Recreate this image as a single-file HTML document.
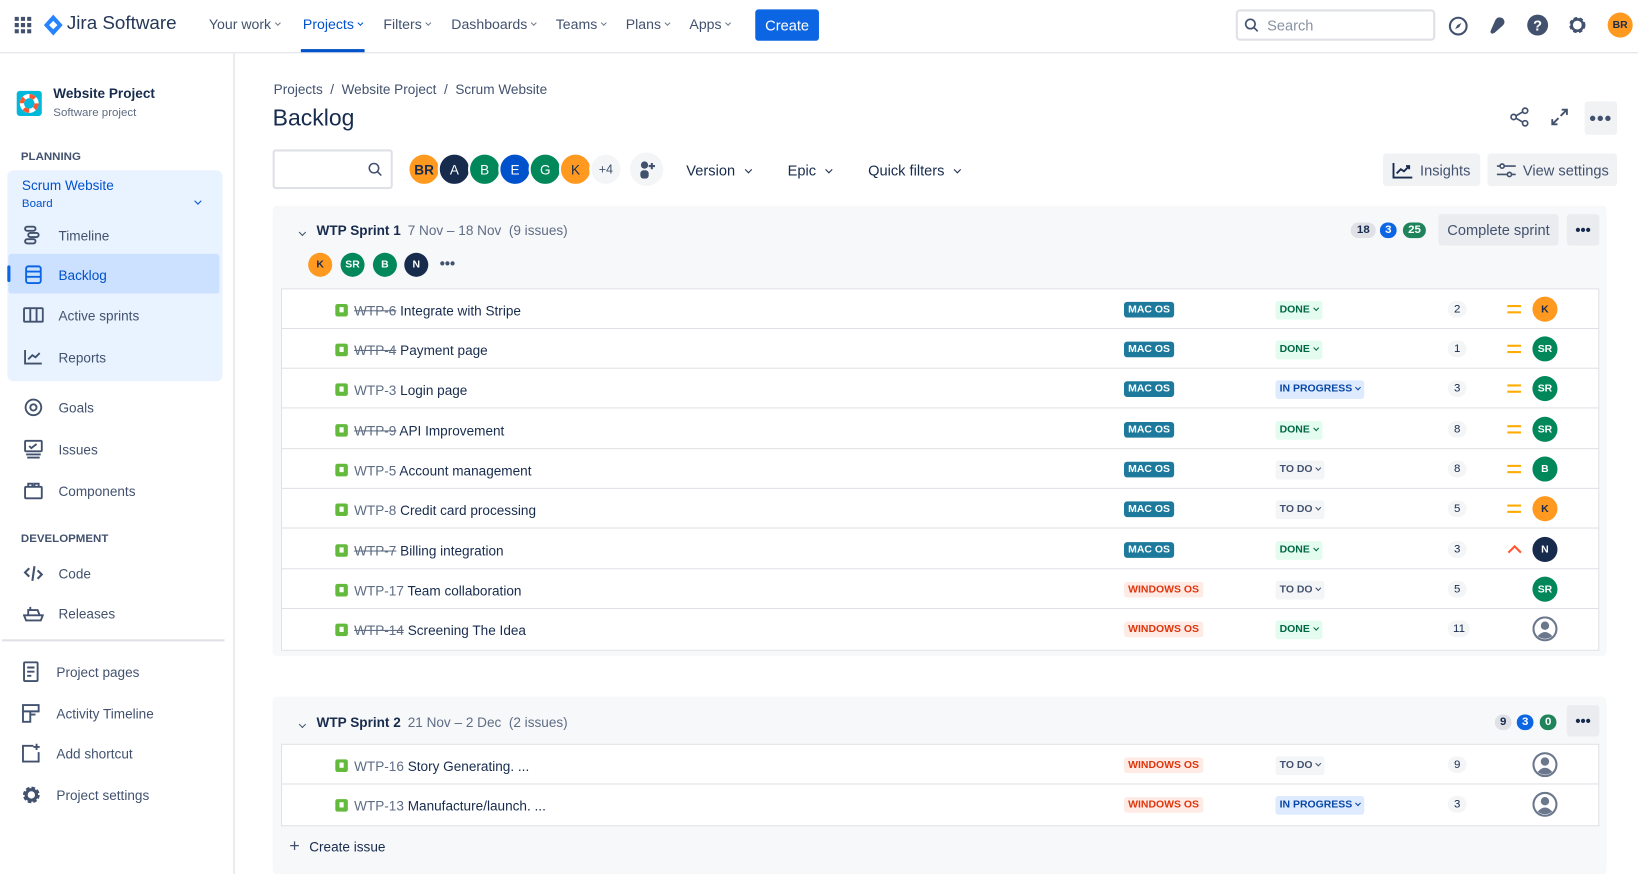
<!DOCTYPE html>
<html><head><meta charset="utf-8">
<style>
*{box-sizing:border-box;margin:0;padding:0}
html,body{width:1638px;height:874px;overflow:hidden;background:#fff}
body{font-family:"Liberation Sans",sans-serif;color:#172b4d}
#w{position:absolute;left:0;top:0;width:1568px;height:837px;transform:scale(1.0446);transform-origin:0 0}
.a{position:absolute}
.ch{display:inline-block;width:5px;height:5px;border-right:1.5px solid currentColor;border-bottom:1.5px solid currentColor;transform:rotate(45deg);vertical-align:middle;margin:-4px 0 0 4px}
.nav{font-size:13.5px;color:#42526e;top:16px}
.nav .ch{color:#6b778c;width:4px;height:4px}
.av{position:absolute;border-radius:50%;color:#fff;font-size:11px;font-weight:bold;display:flex;align-items:center;justify-content:center}
.si{position:absolute;left:22px;display:flex;align-items:center;font-size:13px;color:#42526e}
.si svg{margin-right:14px}
.row{position:absolute;left:0;width:1261px;height:38px;border-bottom:1px solid #dfe1e6;font-size:13px}
.row .ic{position:absolute;left:51px;top:14px;width:12px;height:12px;background:#63ba3c;border-radius:2px}
.row .ic:after{content:"";position:absolute;left:4px;top:3px;width:4px;height:5px;background:#fff}
.row .k{position:absolute;left:69px;top:13px;color:#5e6c84}
.row .k s{color:#5e6c84}
.row .t{color:#172b4d}
.lb{position:absolute;top:12px;left:806px;font-size:10px;font-weight:bold;padding:1px 4px;border-radius:3px;line-height:13px}
.mac{background:#1d7a9c;color:#fff}
.win{background:#ffebe6;color:#de350b}
.st{position:absolute;top:11px;left:951px;font-size:10px;font-weight:bold;padding:2px 4px;border-radius:3px;line-height:14px}
.st .ch{width:4px;height:4px;margin-top:-3px;margin-left:4px}
.done{background:#e3fcef;color:#006644}
.prog{background:#deebff;color:#0747a6}
.todo{background:#f4f5f7;color:#42526e}
.pt{position:absolute;top:11px;left:1116px;min-width:18px;height:16px;border-radius:8px;background:#f4f5f7;font-size:11px;text-align:center;line-height:16px;color:#172b4d;padding:0 5px}
.pr{position:absolute;left:1173px;top:15px;width:13px;height:8px;border-top:2px solid #ffab00;border-bottom:2px solid #ffab00}
.ra{position:absolute;left:1197px;top:7px;width:24px;height:24px}
.btn{position:absolute;background:#f1f2f4;border-radius:3px;font-size:14px;color:#42526e;display:flex;align-items:center;justify-content:center}
.flt{position:absolute;top:155px;font-size:14px;color:#172b4d}
.flt .ch{margin-left:10px;width:5px;height:5px}
</style></head><body><div id="w">
<div class="a" style="left:0;top:50px;width:1568px;height:1px;background:#dfe1e6"></div>
<svg class="a" style="left:14px;top:16px" width="16" height="16"><g fill="#42526e"><rect x="0" y="0" width="4" height="4"/><rect x="6" y="0" width="4" height="4"/><rect x="12" y="0" width="4" height="4"/><rect x="0" y="6" width="4" height="4"/><rect x="6" y="6" width="4" height="4"/><rect x="12" y="6" width="4" height="4"/><rect x="0" y="12" width="4" height="4"/><rect x="6" y="12" width="4" height="4"/><rect x="12" y="12" width="4" height="4"/></g></svg>
<svg class="a" style="left:42px;top:14px" width="18" height="20"><path d="M9 0 L18 10 L9 20 L0 10Z M9 6 L5 10 L9 14 L13 10Z" fill="#2684ff" fill-rule="evenodd"/></svg>
<div class="a" style="left:64px;top:12px;font-size:18px;color:#253858">Jira Software</div>
<div class="a nav" style="left:200px">Your work<span class="ch"></span></div>
<div class="a nav" style="left:290px;color:#0052cc">Projects<span class="ch" style="color:#0052cc"></span></div>
<div class="a" style="left:288px;top:47px;width:61px;height:3px;background:#0052cc"></div>
<div class="a nav" style="left:367px">Filters<span class="ch"></span></div>
<div class="a nav" style="left:432px">Dashboards<span class="ch"></span></div>
<div class="a nav" style="left:532px">Teams<span class="ch"></span></div>
<div class="a nav" style="left:599px">Plans<span class="ch"></span></div>
<div class="a nav" style="left:660px">Apps<span class="ch"></span></div>
<div class="a" style="left:723px;top:9px;width:61px;height:30px;background:#0c66e4;border-radius:3px;color:#fff;font-size:14px;text-align:center;line-height:30px">Create</div>
<div class="a" style="left:1183px;top:9px;width:191px;height:30px;border:2px solid #dfe1e6;border-radius:4px;font-size:14px;color:#8993a4;padding:5px 0 0 28px">Search</div>
<svg class="a" style="left:1191px;top:17px" width="14" height="14"><circle cx="6" cy="6" r="4.5" fill="none" stroke="#42526e" stroke-width="1.6"/><path d="M9.5 9.5 L13 13" stroke="#42526e" stroke-width="1.6"/></svg>
<svg class="a" style="left:1386px;top:15px" width="20" height="20"><circle cx="10" cy="10" r="8" fill="none" stroke="#42526e" stroke-width="2"/><path d="M13 7 L9 9 L7 13 L11 11Z" fill="#42526e"/></svg>
<svg class="a" style="left:1424px;top:14px" width="20" height="20"><path d="M4 15 L8 6 Q10 2 14 4 Q17 7 14 10 L6 17Z M3 16 L5 18" fill="#42526e" stroke="#42526e" stroke-width="1.5"/></svg>
<svg class="a" style="left:1461px;top:13px" width="22" height="22"><circle cx="11" cy="11" r="10" fill="#42526e"/><text x="11" y="16" font-size="14" font-weight="bold" fill="#fff" text-anchor="middle" font-family="Liberation Sans">?</text></svg>
<svg class="a" style="left:1500px;top:14px" width="20" height="20"><circle cx="10" cy="10" r="6" fill="none" stroke="#42526e" stroke-width="3.5" stroke-dasharray="3 2"/><circle cx="10" cy="10" r="5.5" fill="none" stroke="#42526e" stroke-width="2.5"/></svg>
<div class="av" style="left:1539px;top:12px;width:24px;height:24px;background:#ff991f;color:#172b4d;font-size:10px">BR</div>

<div class="a" style="left:223px;top:51px;width:2px;height:786px;background:#ebecf0"></div>
<div class="a" style="left:16px;top:87px;width:24px;height:24px;background:#00b8d9;border-radius:3px"></div>
<svg class="a" style="left:18px;top:89px" width="20" height="20"><circle cx="10" cy="10" r="7" fill="none" stroke="#fff" stroke-width="4"/><circle cx="10" cy="10" r="7" fill="none" stroke="#ff5630" stroke-width="4" stroke-dasharray="5.5 5.5"/></svg>
<div class="a" style="left:51px;top:82px;font-size:13px;font-weight:bold;color:#172b4d">Website Project</div>
<div class="a" style="left:51px;top:102px;font-size:11px;color:#5e6c84">Software project</div>
<div class="a" style="left:20px;top:144px;font-size:11px;font-weight:bold;color:#42526e">PLANNING</div>
<div class="a" style="left:7px;top:163px;width:206px;height:202px;background:#e9f2ff;border-radius:6px"></div>
<div class="a" style="left:21px;top:170px;font-size:13px;color:#0052cc">Scrum Website</div>
<div class="a" style="left:21px;top:189px;font-size:11px;color:#0052cc">Board</div>
<div class="a" style="left:187px;top:184px;color:#0052cc"><span class="ch" style="margin:0"></span></div>
<div class="a" style="left:8px;top:243px;width:202px;height:38px;background:#cce0ff;border-radius:3px"></div>
<div class="a" style="left:7px;top:254px;width:3px;height:16px;background:#0c66e4;border-radius:2px"></div>
<div class="si" style="top:215px"><svg width="20" height="20"><g fill="none" stroke="#42526e" stroke-width="1.8"><rect x="2" y="2" width="10" height="4" rx="2"/><rect x="5" y="8" width="10" height="4" rx="2"/><rect x="2" y="14" width="10" height="4" rx="2"/></g></svg>Timeline</div>
<div class="si" style="top:253px;color:#0052cc"><svg width="20" height="20"><g fill="none" stroke="#0c66e4" stroke-width="1.8"><rect x="3" y="2" width="14" height="16" rx="2"/><path d="M3 7H17M3 12H17"/></g></svg>Backlog</div>
<div class="si" style="top:292px"><svg width="20" height="20"><g fill="none" stroke="#42526e" stroke-width="1.8"><rect x="1" y="3" width="18" height="13" rx="1"/><path d="M7 3V16M13 3V16"/></g></svg>Active sprints</div>
<div class="si" style="top:332px"><svg width="20" height="20"><g fill="none" stroke="#42526e" stroke-width="1.8"><path d="M2 3V16H18"/><path d="M5 12L9 8L12 10L16 6"/></g></svg>Reports</div>
<div class="si" style="top:380px"><svg width="20" height="20"><g fill="none" stroke="#42526e" stroke-width="1.8"><circle cx="10" cy="10" r="7.5"/><circle cx="10" cy="10" r="3"/></g></svg>Goals</div>
<div class="si" style="top:420px"><svg width="20" height="20"><g fill="none" stroke="#42526e" stroke-width="1.8"><rect x="2" y="2" width="16" height="10" rx="1"/><path d="M6 7L8 9L13 5M3 15H17M4 18H16"/></g></svg>Issues</div>
<div class="si" style="top:460px"><svg width="20" height="20"><g fill="none" stroke="#42526e" stroke-width="1.8"><rect x="2" y="6" width="16" height="11" rx="1"/><path d="M5 6V3H9V6M11 6V3H15V6"/></g></svg>Components</div>
<div class="a" style="left:20px;top:510px;font-size:11px;font-weight:bold;color:#42526e">DEVELOPMENT</div>
<div class="si" style="top:539px"><svg width="20" height="20"><g fill="none" stroke="#42526e" stroke-width="2"><path d="M6 5L2 9L6 13M14 7L18 11L14 15M11 3L9 17"/></g></svg>Code</div>
<div class="si" style="top:577px"><svg width="20" height="20"><g fill="none" stroke="#42526e" stroke-width="1.8"><path d="M1 12H19L17 17H3Z M5 12V7H14L16 12 M7 7V4"/></g></svg>Releases</div>
<div class="a" style="left:2px;top:612px;width:213px;height:2px;background:#dfe1e6"></div>
<div class="si" style="top:633px;left:20px"><svg width="20" height="20"><g fill="none" stroke="#42526e" stroke-width="1.8"><rect x="3" y="1" width="13" height="18" rx="1"/><path d="M6 6H13M6 10H13M6 14H10"/></g></svg>Project pages</div>
<div class="si" style="top:673px;left:20px"><svg width="20" height="20"><g fill="none" stroke="#42526e" stroke-width="1.8"><path d="M2 2H17V8H2Z M2 8V18H9V8 M9 11H14"/></g></svg>Activity Timeline</div>
<div class="si" style="top:711px;left:20px"><svg width="20" height="20"><g fill="none" stroke="#42526e" stroke-width="1.8"><path d="M12 3H2V18H17V9 M15 1V7M12 4H18"/></g></svg>Add shortcut</div>
<div class="si" style="top:751px;left:20px"><svg width="20" height="20"><circle cx="10" cy="10" r="6" fill="none" stroke="#42526e" stroke-width="4" stroke-dasharray="3 1.7"/><circle cx="10" cy="10" r="5" fill="none" stroke="#42526e" stroke-width="3"/></svg>Project settings</div>

<div class="a" style="left:262px;top:78px;font-size:13px;color:#42526e">Projects &nbsp;/&nbsp; Website Project &nbsp;/&nbsp; Scrum Website</div>
<div class="a" style="left:261px;top:100px;font-size:22px;color:#172b4d">Backlog</div>
<svg class="a" style="left:1445px;top:102px" width="20" height="20"><g fill="none" stroke="#42526e" stroke-width="1.6"><circle cx="4" cy="10" r="2.5"/><circle cx="15" cy="4" r="2.5"/><circle cx="15" cy="16" r="2.5"/><path d="M6 9L13 5M6 11L13 15"/></g></svg>
<svg class="a" style="left:1484px;top:103px" width="18" height="18"><g fill="none" stroke="#42526e" stroke-width="1.8"><path d="M10 8L16 2M11 2H16V7M8 10L2 16M2 11V16H7"/></g></svg>
<div class="btn" style="left:1517px;top:97px;width:31px;height:32px;font-size:18px;font-weight:bold;letter-spacing:1px">•••</div>
<div class="a" style="left:261px;top:143px;width:115px;height:38px;border:2px solid #dfe1e6;border-radius:3px"></div>
<svg class="a" style="left:352px;top:155px" width="14" height="14"><circle cx="6" cy="6" r="4.5" fill="none" stroke="#42526e" stroke-width="1.5"/><path d="M9.5 9.5L13 13" stroke="#42526e" stroke-width="1.5"/></svg>
<div class="av" style="left:390px;top:146px;width:32px;height:32px;background:#ff991f;color:#172b4d;font-size:13px;border:2px solid #fff">BR</div>
<div class="av" style="left:419px;top:146px;width:32px;height:32px;background:#172b4d;font-size:13px;border:2px solid #fff;font-weight:normal">A</div>
<div class="av" style="left:448px;top:146px;width:32px;height:32px;background:#00875a;font-size:13px;border:2px solid #fff;font-weight:normal">B</div>
<div class="av" style="left:477px;top:146px;width:32px;height:32px;background:#0052cc;font-size:13px;border:2px solid #fff;font-weight:normal">E</div>
<div class="av" style="left:506px;top:146px;width:32px;height:32px;background:#00875a;font-size:13px;border:2px solid #fff;font-weight:normal">G</div>
<div class="av" style="left:535px;top:146px;width:32px;height:32px;background:#ff991f;color:#172b4d;font-size:13px;border:2px solid #fff;font-weight:normal">K</div>
<div class="av" style="left:564px;top:146px;width:32px;height:32px;background:#f4f5f7;color:#42526e;font-size:12px;border:2px solid #fff;font-weight:normal">+4</div>
<div class="av" style="left:603px;top:146px;width:32px;height:32px;background:#f4f5f7"><svg width="18" height="18"><circle cx="7" cy="5" r="3.5" fill="#42526e"/><rect x="3" y="10" width="8" height="8" rx="3" fill="#42526e"/><path d="M14 3V9M11 6H17" stroke="#42526e" stroke-width="2"/></svg></div>
<div class="flt" style="left:657px">Version<span class="ch"></span></div>
<div class="flt" style="left:754px">Epic<span class="ch"></span></div>
<div class="flt" style="left:831px">Quick filters<span class="ch"></span></div>
<div class="btn" style="left:1324px;top:147px;width:93px;height:31px"><svg width="20" height="16" style="margin-right:6px"><g fill="none" stroke="#172b4d" stroke-width="1.8"><path d="M1 1V15H19"/><path d="M4 11L8 7L11 9L16 4M13 4H16V7"/></g></svg>Insights</div>
<div class="btn" style="left:1424px;top:147px;width:124px;height:31px"><svg width="20" height="16" style="margin-right:6px"><g fill="none" stroke="#42526e" stroke-width="1.6"><path d="M1 4H19M1 12H19"/><circle cx="6" cy="4" r="2" fill="#fff"/><circle cx="13" cy="12" r="2" fill="#fff"/></g></svg>View settings</div>

<div class="a" style="left:261px;top:197px;width:1277px;height:431px;background:#f7f8f9;border-radius:4px"></div>
<div class="a" style="left:287px;top:214px;color:#42526e"><span class="ch" style="margin:0"></span></div>
<div class="a" style="left:303px;top:213px;font-size:13px"><b style="color:#172b4d">WTP Sprint 1</b> <span style="color:#5e6c84;margin-left:3px">7 Nov – 18 Nov &nbsp;(9 issues)</span></div>
<div class="av" style="left:295px;top:242px;width:23px;height:23px;background:#ff991f;color:#172b4d;font-size:10px">K</div>
<div class="av" style="left:326px;top:242px;width:23px;height:23px;background:#00875a;font-size:10px">SR</div>
<div class="av" style="left:357px;top:242px;width:23px;height:23px;background:#00875a;font-size:10px">B</div>
<div class="av" style="left:387px;top:242px;width:23px;height:23px;background:#172b4d;font-size:10px">N</div>
<div class="a" style="left:421px;top:244px;font-size:14px;font-weight:bold;color:#42526e">•••</div>
<div class="a" style="left:1293px;top:213px;height:15px;padding:0 6px;border-radius:8px;background:#dfe1e6;font-size:11px;font-weight:bold;line-height:15px">18</div>
<div class="a" style="left:1321px;top:213px;height:15px;padding:0 5px;border-radius:8px;background:#0c66e4;color:#fff;font-size:11px;font-weight:bold;line-height:15px">3</div>
<div class="a" style="left:1343px;top:213px;height:15px;padding:0 5px;border-radius:8px;background:#1f845a;color:#fff;font-size:11px;font-weight:bold;line-height:15px">25</div>
<div class="btn" style="left:1377px;top:205px;width:115px;height:30px;background:#ebecf0">Complete sprint</div>
<div class="btn" style="left:1500px;top:205px;width:31px;height:30px;background:#ebecf0;font-size:14px;font-weight:bold;color:#172b4d">•••</div>

<div class="a" style="left:269px;top:276px;width:1262px;height:347px;background:#fff;border:1px solid #dfe1e6">
<div class="row" style="top:0"><div class="ic"></div><div class="k"><s>WTP-6</s> <span class="t">Integrate with Stripe</span></div><span class="lb mac">MAC OS</span><span class="st done">DONE<span class="ch"></span></span><span class="pt">2</span><div class="pr"></div><div class="av ra" style="background:#ff991f;color:#172b4d;font-size:10px">K</div></div>
<div class="row" style="top:38px"><div class="ic"></div><div class="k"><s>WTP-4</s> <span class="t">Payment page</span></div><span class="lb mac">MAC OS</span><span class="st done">DONE<span class="ch"></span></span><span class="pt">1</span><div class="pr"></div><div class="av ra" style="background:#00875a;font-size:10px">SR</div></div>
<div class="row" style="top:76px"><div class="ic"></div><div class="k">WTP-3 <span class="t">Login page</span></div><span class="lb mac">MAC OS</span><span class="st prog">IN PROGRESS<span class="ch"></span></span><span class="pt">3</span><div class="pr"></div><div class="av ra" style="background:#00875a;font-size:10px">SR</div></div>
<div class="row" style="top:115px"><div class="ic"></div><div class="k"><s>WTP-9</s> <span class="t">API Improvement</span></div><span class="lb mac">MAC OS</span><span class="st done">DONE<span class="ch"></span></span><span class="pt">8</span><div class="pr"></div><div class="av ra" style="background:#00875a;font-size:10px">SR</div></div>
<div class="row" style="top:153px"><div class="ic"></div><div class="k">WTP-5 <span class="t">Account management</span></div><span class="lb mac">MAC OS</span><span class="st todo">TO DO<span class="ch"></span></span><span class="pt">8</span><div class="pr"></div><div class="av ra" style="background:#00875a;font-size:10px">B</div></div>
<div class="row" style="top:191px"><div class="ic"></div><div class="k">WTP-8 <span class="t">Credit card processing</span></div><span class="lb mac">MAC OS</span><span class="st todo">TO DO<span class="ch"></span></span><span class="pt">5</span><div class="pr"></div><div class="av ra" style="background:#ff991f;color:#172b4d;font-size:10px">K</div></div>
<div class="row" style="top:230px"><div class="ic"></div><div class="k"><s>WTP-7</s> <span class="t">Billing integration</span></div><span class="lb mac">MAC OS</span><span class="st done">DONE<span class="ch"></span></span><span class="pt">3</span><svg class="a" style="left:1173px;top:14px" width="14" height="9"><path d="M1 8L7 2L13 8" fill="none" stroke="#ff5630" stroke-width="2"/></svg><div class="av ra" style="background:#172b4d;font-size:10px">N</div></div>
<div class="row" style="top:268px"><div class="ic"></div><div class="k">WTP-17 <span class="t">Team collaboration</span></div><span class="lb win">WINDOWS OS</span><span class="st todo">TO DO<span class="ch"></span></span><span class="pt">5</span><div class="av ra" style="background:#00875a;font-size:10px">SR</div></div>
<div class="row" style="top:306px;border-bottom:none"><div class="ic"></div><div class="k"><s>WTP-14</s> <span class="t">Screening The Idea</span></div><span class="lb win">WINDOWS OS</span><span class="st done">DONE<span class="ch"></span></span><span class="pt">11</span><svg class="ra a" width="24" height="24"><circle cx="12" cy="12" r="12" fill="#6b778c"/><circle cx="12" cy="12" r="10" fill="#fff"/><circle cx="12" cy="9" r="4" fill="#6b778c"/><path d="M5 19Q12 11 19 19Q12 24 5 19" fill="#6b778c"/></svg></div>
</div>

<div class="a" style="left:261px;top:667px;width:1277px;height:170px;background:#f7f8f9;border-radius:4px"></div>
<div class="a" style="left:287px;top:685px;color:#42526e"><span class="ch" style="margin:0"></span></div>
<div class="a" style="left:303px;top:684px;font-size:13px"><b style="color:#172b4d">WTP Sprint 2</b> <span style="color:#5e6c84;margin-left:3px">21 Nov – 2 Dec &nbsp;(2 issues)</span></div>
<div class="a" style="left:1431px;top:684px;height:15px;padding:0 5px;border-radius:8px;background:#dfe1e6;font-size:11px;font-weight:bold;line-height:15px">9</div>
<div class="a" style="left:1452px;top:684px;height:15px;padding:0 5px;border-radius:8px;background:#0c66e4;color:#fff;font-size:11px;font-weight:bold;line-height:15px">3</div>
<div class="a" style="left:1474px;top:684px;height:15px;padding:0 5px;border-radius:8px;background:#1f845a;color:#fff;font-size:11px;font-weight:bold;line-height:15px">0</div>
<div class="btn" style="left:1500px;top:675px;width:31px;height:30px;background:#ebecf0;font-size:14px;font-weight:bold;color:#172b4d">•••</div>
<div class="a" style="left:269px;top:712px;width:1262px;height:79px;background:#fff;border:1px solid #dfe1e6">
<div class="row" style="top:0"><div class="ic"></div><div class="k">WTP-16 <span class="t">Story Generating. ...</span></div><span class="lb win">WINDOWS OS</span><span class="st todo">TO DO<span class="ch"></span></span><span class="pt">9</span><svg class="ra a" width="24" height="24"><circle cx="12" cy="12" r="12" fill="#6b778c"/><circle cx="12" cy="12" r="10" fill="#fff"/><circle cx="12" cy="9" r="4" fill="#6b778c"/><path d="M5 19Q12 11 19 19Q12 24 5 19" fill="#6b778c"/></svg></div>
<div class="row" style="top:38px;border-bottom:none"><div class="ic"></div><div class="k">WTP-13 <span class="t">Manufacture/launch. ...</span></div><span class="lb win">WINDOWS OS</span><span class="st prog">IN PROGRESS<span class="ch"></span></span><span class="pt">3</span><svg class="ra a" width="24" height="24"><circle cx="12" cy="12" r="12" fill="#6b778c"/><circle cx="12" cy="12" r="10" fill="#fff"/><circle cx="12" cy="9" r="4" fill="#6b778c"/><path d="M5 19Q12 11 19 19Q12 24 5 19" fill="#6b778c"/></svg></div>
</div>
<div class="a" style="left:277px;top:800px;font-size:17px;color:#42526e">+</div>
<div class="a" style="left:296px;top:803px;font-size:13px;color:#172b4d">Create issue</div>
</div></body></html>
